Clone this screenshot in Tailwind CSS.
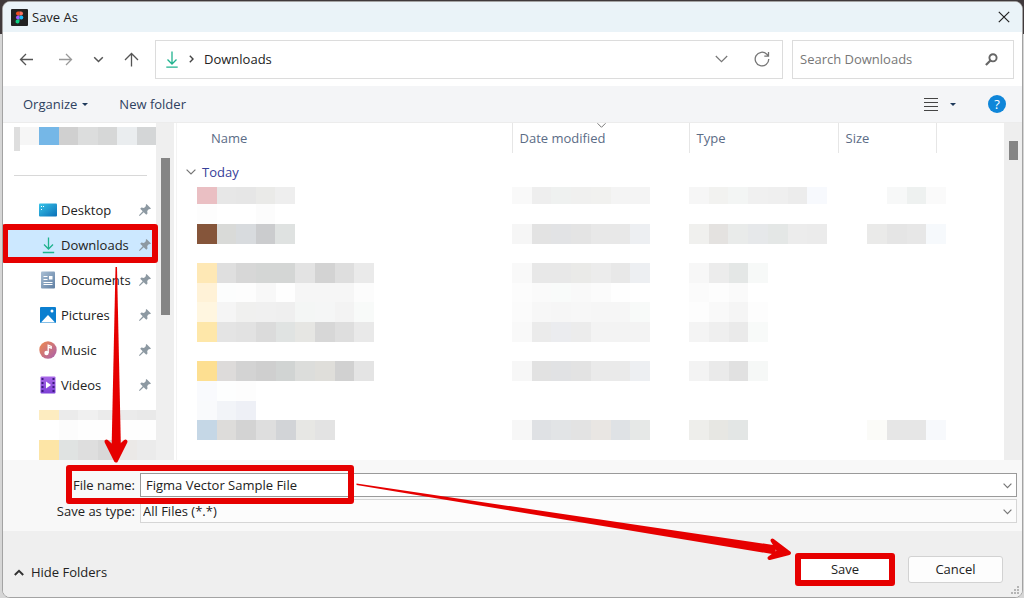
<!DOCTYPE html>
<html lang="en">
<head>
  <meta charset="UTF-8" />
  <meta name="viewport" content="width=device-width, initial-scale=1.0"/>
  <title>Save As</title>
  <script src="https://cdn.jsdelivr.net/npm/@tailwindcss/browser@4"></script>
</head>
<body class="min-h-screen flex pt-px pl-0.5 pr-px pb-px bg-[linear-gradient(#3f393b_34px,#d6d6d6_34px)] font-['Open_Sans','Noto_Sans',sans-serif] text-[13px] leading-5 text-[#222]">

  <div class="relative flex-1 flex flex-col overflow-hidden rounded-lg border border-[#a3a3a3] bg-white">

    <!-- Title bar -->
    <header class="h-[30px] shrink-0 flex items-center bg-[#eaf3f8] pl-2 pr-3">
      <svg class="size-[17px] mr-1" viewBox="0 0 17 17">
        <rect width="17" height="17" rx="1" fill="#222"/>
        <path d="M8.500 2.500H7a2 2 0 0 0 0 4h1.500z" fill="#f24e1e"/>
        <path d="M8.500 2.500h1.500a2 2 0 0 1 0 4H8.500z" fill="#ff7262"/>
        <path d="M8.500 6.500H7a2 2 0 0 0 0 4h1.500z" fill="#a259ff"/>
        <circle cx="10.300" cy="8.500" r="2" fill="#1abcfe"/>
        <path d="M8.500 10.500H7a2 2 0 1 0 1.500 2z" fill="#0acf83"/>
      </svg>
      <h1 class="flex-1">Save As</h1>
      <button aria-label="Close">
        <svg class="size-3" viewBox="0 0 12 12" fill="none" stroke="#222" stroke-width="1.200"><path d="M.8.8l10.400 10.400M11.200.8L.8 11.200"/></svg>
      </button>
    </header>

    <!-- Navigation -->
    <nav class="h-[54px] shrink-0 flex items-center pl-4 pr-2">
      <button aria-label="Back" class="mr-6">
        <svg class="size-[15px]" viewBox="0 0 15 15" fill="none" stroke="#555" stroke-width="1.300"><path d="M14 7.500H1.500M7 2L1.500 7.500 7 13"/></svg>
      </button>
      <button aria-label="Forward" class="mr-5">
        <svg class="size-[15px]" viewBox="0 0 15 15" fill="none" stroke="#999" stroke-width="1.300"><path d="M1 7.500h12.500M8 2l5.500 5.500L8 13"/></svg>
      </button>
      <button aria-label="Recent locations" class="mr-5">
        <svg class="w-[11px] h-[7px]" viewBox="0 0 11 7" fill="none" stroke="#555" stroke-width="1.500"><path d="M1.200 1.200l4.300 4.300 4.300-4.300"/></svg>
      </button>
      <button aria-label="Up" class="mr-4">
        <svg class="size-[15px]" viewBox="0 0 15 15" fill="none" stroke="#555" stroke-width="1.300"><path d="M7.500 14.500V1.500M1 8l6.500-6.500L14 8"/></svg>
      </button>
      <div class="flex-1 h-[39px] flex items-center border border-[#dcdcdc] pl-[10px] pr-3">
        <svg class="w-3 h-[17px] mr-[11px]" viewBox="0 0 12 17" fill="none" stroke="#1fb28e" stroke-width="1.300"><path d="M6 .5v12M1.500 8.500L6 13l4.500-4.500M.3 16.200h11.400"/></svg>
        <svg class="w-[5px] h-2 mr-[10px]" viewBox="0 0 5 8" fill="none" stroke="#444" stroke-width="1.400"><path d="M.8.8L4 4 .8 7.200"/></svg>
        <a href="#" class="flex-1">Downloads</a>
        <button aria-label="Previous locations" class="mr-[26px]">
          <svg class="w-[13px] h-2" viewBox="0 0 13 8" fill="none" stroke="#777" stroke-width="1.200"><path d="M.8 1l5.700 5.700L12.200 1"/></svg>
        </button>
        <button aria-label="Refresh">
          <svg class="size-4" viewBox="0 0 16 16" fill="none" stroke="#777" stroke-width="1.300"><path d="M14.800 8A6.800 6.800 0 1 1 12.800 3.200L14.300 5M14.500 1v4.200h-4.200"/></svg>
        </button>
      </div>
      <div class="w-[222px] h-[39px] ml-[9px] flex items-center border border-[#dcdcdc] pl-[7px] pr-[15px]">
        <input type="search" aria-label="Search Downloads" placeholder="Search Downloads" class="flex-1 min-w-0 outline-none placeholder:text-[#777]" />
        <svg class="size-[13px]" viewBox="0 0 13 13" fill="none" stroke="#666"><circle cx="8" cy="4.800" r="3.600" stroke-width="1.900"/><path d="M5.400 7.500L.9 12" stroke-width="2.200"/></svg>
      </div>
    </nav>

    <!-- Toolbar -->
    <div class="h-[37px] shrink-0 flex items-center bg-[#f4f5f7] border-b border-[#ececec] pl-5 pr-4 text-[#2e4160]">
      <button class="flex items-center mr-[31px]">Organize
        <svg class="w-[6px] h-[3px] ml-[5px]" viewBox="0 0 6 3"><path d="M0 0h6L3 3z" fill="#1e395b"/></svg>
      </button>
      <button>New folder</button>
      <button aria-label="Change view" class="ml-auto mr-8 flex items-center">
        <svg class="w-[14px] h-[13px] mr-3" viewBox="0 0 14 13" fill="none" stroke="#444"><path d="M0 .5h14M0 4.500h14M0 8.500h14M0 12.500h14"/></svg>
        <svg class="w-[6px] h-[3px]" viewBox="0 0 6 3"><path d="M0 0h6L3 3z" fill="#1e395b"/></svg>
      </button>
      <button aria-label="Help" class="size-[18px] rounded-full bg-[#0f86d9] text-white leading-[18px]">?</button>
    </div>

    <main class="flex-1 min-h-[336px] flex">

      <!-- Folder tree -->
      <aside class="w-[153px] shrink-0 pt-1">
        <div class="flex h-6 pl-[11px]">
          <div class="w-[6px] bg-[#dedede]"></div>
          <div class="w-[136px] h-[18px] flex" data-cells="f6f6f6 75b7e7 d0d0d0 dcdddd d6d7d7 eaedef d4d6d7"></div>
        </div>
        <hr class="ml-[11px] mr-[9px] mt-6 mb-4 border-[#d8d8d8]" />
        <ul id="places"></ul>
        <div class="ml-9 mt-2 h-[10px] flex" data-cells="fdecc0 ebebeb f0f0f0 ebebeb ebebeb e9e9e9"></div>
        <div class="ml-9 h-5 flex" data-cells="ffffff fcfcfc fefefe fefefe fefefe fefefe"></div>
        <div class="ml-9 h-5 flex" data-cells="fde5a6 e0e3e2 dedede d8d8d8 ebe9e7 ebebeb"></div>
      </aside>
      <div class="w-[18px] shrink-0 bg-[#efefef] pt-[35px]">
        <div class="w-[9px] h-[157px] mx-auto bg-[#858585]"></div>
      </div>
      <div class="w-[3px] shrink-0 border-r border-[#f3f3f3]"></div>

      <!-- File list -->
      <div class="flex-1 min-w-0 overflow-hidden">
        <table class="w-full table-fixed text-left">
          <thead>
            <tr class="h-[30px] text-[#5b6c86]">
              <th class="w-[335px] pl-[34px] font-normal border-r border-[#e6e6e6]">Name</th>
              <th class="w-[177px] pl-[7px] font-normal border-r border-[#e6e6e6] relative">Date modified
                <svg class="absolute left-[84px] top-0 w-[9px] h-[5px]" viewBox="0 0 9 5" fill="none" stroke="#777"><path d="M.5.3L4.500 4.300 8.500.3"/></svg>
              </th>
              <th class="w-[149px] pl-[7px] font-normal border-r border-[#e6e6e6]">Type</th>
              <th class="w-[98px] pl-[7px] font-normal border-r border-[#e6e6e6]">Size</th>
              <td></td>
            </tr>
          </thead>
          <tbody id="files">
            <tr class="h-[34px]">
              <td colspan="5" class="pl-[9px] pt-1">
                <button class="flex items-center text-[#36409a]">
                  <svg class="w-[10px] h-[6px] mr-[6px]" viewBox="0 0 10 6" fill="none" stroke="#777" stroke-width="1.200"><path d="M.6.6L5 5 9.400.6"/></svg>Today
                </button>
              </td>
            </tr>
          </tbody>
        </table>
      </div>
      <div class="w-[18px] shrink-0 bg-[#eeeeee] pt-[18px]">
        <div class="w-[9px] h-[19px] ml-[5px] bg-[#858585]"></div>
      </div>
    </main>

    <!-- File name and type -->
    <form class="shrink-0 bg-[#f8f8f8] pt-[13px] pb-2 pr-[5px] flex flex-col gap-[2px]">
      <div class="relative z-10 flex items-center">
        <label for="fileName" class="w-[132px] mr-[5px] text-right">File name:</label>
        <input type="text" id="fileName" value="Figma Vector Sample File" class="flex-1 h-6 pl-[5px] bg-white border border-[#9a9a9a] outline-none" />
        <svg class="absolute right-[5px] top-[10px] w-[9px] h-[6px]" viewBox="0 0 9 6" fill="none" stroke="#777" stroke-width="1.200"><path d="M.6.7l3.900 3.900L8.400.7"/></svg>
        <div class="absolute left-[63px] -top-2 w-[288px] h-[39px] border-[6px] border-[#e60000] rounded-[3px] pointer-events-none"></div>
      </div>
      <div class="relative flex items-center">
        <label for="saveType" class="w-[132px] mr-[5px] text-right">Save as type:</label>
        <select id="saveType" class="flex-1 h-6 pl-[2px] appearance-none bg-[#fcfcfc] border border-[#d6d6d6] outline-none">
          <option>All Files (*.*)</option>
        </select>
        <svg class="absolute right-[5px] top-[10px] w-[9px] h-[6px]" viewBox="0 0 9 6" fill="none" stroke="#777" stroke-width="1.200"><path d="M.6.7l3.900 3.900L8.400.7"/></svg>
      </div>
    </form>

    <!-- Footer -->
    <footer class="relative h-[66px] shrink-0 bg-[#efefef] flex items-center pt-[10px] pl-[11px] pr-[19px]">
      <button class="flex items-center mt-[6px] mr-auto">
        <svg class="w-[10px] h-[7px] mr-[7px]" viewBox="0 0 10 7" fill="none" stroke="#333" stroke-width="2"><path d="M.8 6L5 1.800 9.200 6"/></svg>Hide Folders
      </button>
      <button class="w-[100px] h-[33px] mr-[13px] bg-white border-[6px] border-[#e60000] rounded-[3px] leading-5">Save</button>
      <button class="w-[95px] h-[27px] bg-[#fdfdfd] border border-[#d2d2d2] rounded-[3px]">Cancel</button>
      <svg class="absolute right-[2px] bottom-[2px] size-[9px]" viewBox="0 0 9 9" fill="#b5b5b5"><path d="M6 0h2v2H6zM6 3h2v2H6zM6 6h2v2H6zM3 3h2v2H3zM3 6h2v2H3zM0 6h2v2H0z"/></svg>
    </footer>

    <!-- Step arrows -->
    <svg class="absolute z-20 left-0 top-0 w-[1020px] h-[595px] pointer-events-none" viewBox="3 2 1020 595" fill="#e60000">
      <path d="M115.500 267h1.500L121 452h-9.500z"/>
      <path d="M106.500 441.500L116 450l9.500-8.500L116 460.500z" stroke="#e60000" stroke-width="4" stroke-linejoin="round"/>
      <path d="M356.500 483.500v1.500L775 554.500l1.500-9z"/>
      <path d="M772.500 540.500L779 551l-9.500 7 19.500-5z" stroke="#e60000" stroke-width="4" stroke-linejoin="round"/>
    </svg>
  </div>

  <!-- Gradients used by the folder icons -->
  <svg class="absolute size-0">
    <defs>
      <linearGradient id="blue" x2="1" y2="1"><stop stop-color="#38c4e8"/><stop offset="1" stop-color="#0a6fb8"/></linearGradient>
      <linearGradient id="warm" x2="1" y2="1"><stop stop-color="#f08a4b"/><stop offset="1" stop-color="#a95fae"/></linearGradient>
      <linearGradient id="slate" x2="1" y2="1"><stop stop-color="#a9bfd4"/><stop offset="1" stop-color="#5f7fa3"/></linearGradient>
      <linearGradient id="violet" x2="0" y2="1"><stop stop-color="#a968e8"/><stop offset="1" stop-color="#7c3fd6"/></linearGradient>
    </defs>
  </svg>

  <script>
    const places = [
      ["Desktop", '<rect y="2.500" width="18" height="13" rx="1" fill="url(#blue)"/><path d="M2 5h1v1H2zM2 8h1v1H2zM4 5h1v1H4z" fill="#fff"/>'],
      ["Downloads", '<path d="M9.500 1.500v11M5 8.500L9.500 13 14 8.500M3.800 16.500h11.400" fill="none" stroke="#1fb28e" stroke-width="1.300"/>'],
      ["Documents", '<rect x="2" y=".5" width="14" height="17" rx="1" fill="url(#slate)"/><path d="M4.500 5.500h4M4.500 8.500h4M4.500 11.500h9M4.500 13.500h9" stroke="#fff"/><path d="M10 5h3.500v3.500H10z" fill="#fff"/>'],
      ["Pictures", '<rect x="1" y="1" width="16" height="16" rx="1" fill="#0b7fd0"/><path d="M2 16.500L9 9l7 7.500z" fill="#fff"/><circle cx="13" cy="5" r="1.500" fill="#fff"/>'],
      ["Music", '<circle cx="9" cy="9" r="8.700" fill="url(#warm)"/><circle cx="7.500" cy="12" r="2.200" fill="#fff"/><path d="M9.200 12V4.200l3 1.200v1.800l-3-1" fill="none" stroke="#fff" stroke-width="1.300"/>'],
      ["Videos", '<rect x="1.500" y=".5" width="15" height="17" rx="1" fill="url(#violet)"/><path d="M3.500 2v15M14.500 2v15" stroke="#3e1a80" stroke-width="2" stroke-dasharray="2 2"/><path d="M7 5.500v7l5-3.500z" fill="#fff"/>']
    ];

    document.getElementById("places").innerHTML = places.map(([name, icon]) => {
      const active = name === "Downloads";
      return `<li class="relative">
        <a href="#" class="h-[35px] flex items-center pl-9 pr-[5px] ${active ? "bg-[#cce8ff]" : ""}">
          <svg class="size-[18px] mr-[4px]" viewBox="0 0 18 18">${icon}</svg>
          <span class="flex-1">${name}</span>
          <svg class="size-3" viewBox="0 0 12 12" fill="#8d99a2"><path d="M7.500 0L12 4.500 10.800 5.300 10 5 8.200 7l.3 2.600-1.200 1.200L4.700 8.300 1 11.800l-.8.2L.2 11l3.500-3.700L1.200 4.800l1.200-1.200L5 3.900 7 2 6.700.9z"/></svg>
        </a>
        ${active ? '<div class="absolute z-10 -left-px -right-[2px] -top-[3px] -bottom-px border-[6px] border-[#e60000] rounded-[3px] pointer-events-none"></div>' : ""}
      </li>`;
    }).join("");

    // height, then the redacted cells of name, date, type and size
    const files = [
      [17, "eabfc3 e7e7e7 e6e6e6 eaeae8 eeeeee", "f9f9f9 eeeeee eff1f0 f0f0ef f1f1ef f4f4f4 f4f4f4", "f6f6f6 f2f2f0 f3f5f4 f0f0f0 efefef ececec f7f9fd", "ffffff f7f8f8 eef1f0 fafafa"],
      [20, "fdfdfd ffffff ffffff fcfcfc ffffff", "", "", ""],
      [20, "85553a d9dad8 d8dbde cbccce dfe2e1", "f6f6f6 e3e3e3 e2e3e5 e4e4e4 e8e8e8 e8e8e8 edeff2", "f0f0ee e4e2e0 e9ebea e6e8ea e4e7e6 ececec ebebeb", "eaeae9 e5e5e5 e7e7e7 f6f9fc"],
      [19, "", "", "", ""],
      [20, "fee8b5 dfdfdf d7d7d7 d4d6d5 d4d6d5 e3e3e3 d3d3d3 dedede eaeaea", "f9f9f9 e8e8e8 e8e8e8 eaeae8 ececec e8e8e8 edeff2", "f7f7f7 ececec e4e7e6 f7f9f8", ""],
      [19, "fff2d7 fcfdfd fdfdfd f8f8f8 fefefe f6f6f6 f6f6f6 f6f6f6 fcfcfc", "fcfcfc fafafa f9fbfa f9f9f9 fbfbfb fefefe ffffff", "fbfbfb fdfdfd fafafa ffffff", ""],
      [20, "fff6e0 f5f5f5 f0f0ef f0f0f0 efefef f4f6f5 f5f6f6 f3f3f3 f8faf9", "fbfbfb f7f7f7 f6f6f6 f7f7f7 f6f6f6 f6f6f6 f8faf9", "fdfdfd f9f9f9 f5f5f5 fdfdfd", ""],
      [20, "fee7a9 e4e4e4 e2e2e2 dbdbdb e0e3e2 e6e6e3 d7d7d7 dedede e9e9e9", "f9f9f9 ebebeb ebecef ececec f3f3f3 f3f3f3 f3f3f3", "f4f4f4 efefef eaeaea f8faf9", ""],
      [19, "", "", "", ""],
      [20, "fddf91 dddbda d3d3d3 cfcfcf d1d4d3 dcdddb dfdeda d1d1d1 e4e4e4", "f7f7f7 e2e2e2 e1e2e4 e3e3e3 eaeaea eaeaea edeff2", "f3f3f3 eaeaea e1e1e1 f6f8f7", ""],
      [20, "f9fafd fdfefe fdfdfd", "", "", ""],
      [19, "f9fafc f2f4f8 eef0f6", "", "", ""],
      [20, "c5d7e6 dddcda d3d3d3 dedede d2d4d7 e7e7e4 e3e3e3", "f7f7f7 dfe1e4 e2e4e6 e3e3e3 e9e6e3 dfe2e5 e6e8e7", "eeeeeb e7e7e3 e3e6e5", "fbfbf8 e6e6e6 e6e6e6 f7f9fc"]
    ];

    const pitch = 59 / 3;
    const strip = (cells) => {
      const width = cells ? Math.round(cells.split(" ").length * pitch) : 0;
      return `<div class="h-full flex" style="width:${width}px" data-cells="${cells}"></div>`;
    };

    document.getElementById("files").insertAdjacentHTML("beforeend", files.map(([height, name, date, type, size]) =>
      `<tr style="height:${height}px">
        <td class="h-[inherit] pl-5">${strip(name)}</td>
        <td class="h-[inherit]">${strip(date)}</td>
        <td class="h-[inherit]">${strip(type)}</td>
        <td class="h-[inherit] pl-[29px]" colspan="2">${strip(size)}</td>
      </tr>`
    ).join(""));

    document.querySelectorAll("[data-cells]").forEach((el) => {
      if (!el.dataset.cells) return;
      el.innerHTML = el.dataset.cells.split(" ").map((c) => `<span class="flex-1" style="background:#${c}"></span>`).join("");
    });
  </script>

</body>
</html>
